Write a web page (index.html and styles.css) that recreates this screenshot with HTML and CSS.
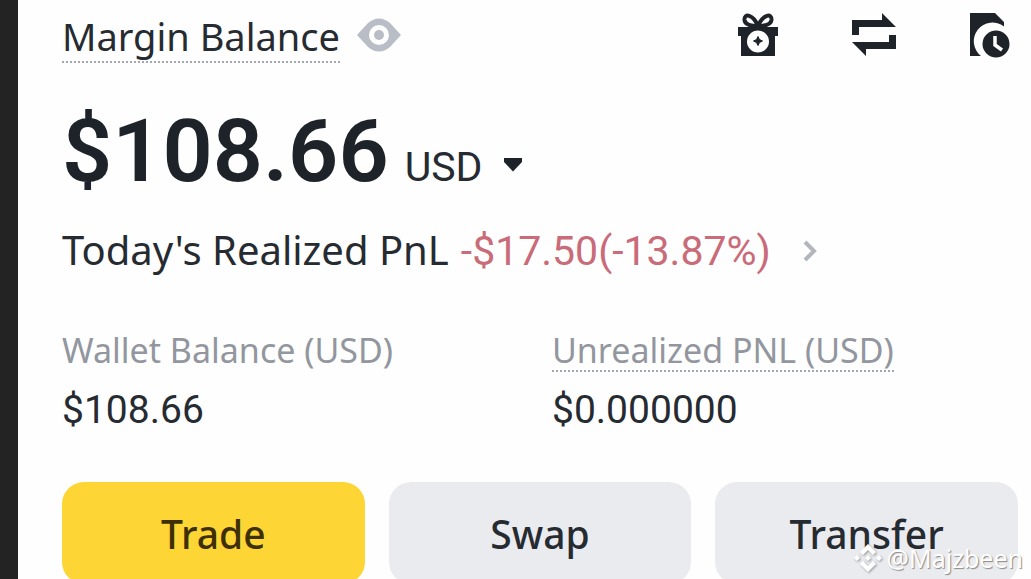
FILE: index.html
```html
<!DOCTYPE html>
<html lang="en">
<head>
<meta charset="utf-8">
<meta name="viewport" content="width=device-width, initial-scale=1">
<title>Margin Balance</title>
<link rel="stylesheet" href="styles.css">
</head>
<body>
<main class="wallet">
  <header class="topbar">
    <h1 class="title">Margin Balance</h1>
    <button class="icon-button eye" type="button" aria-label="Hide balance">
      <svg width="44" height="34" viewBox="0 0 44 34"><path fill="#b9bdc5" fill-rule="evenodd" d="M0 17 11 5Q22-4 33 5L44 17 33 29Q22 38 11 29ZM22 7a10 10 0 1 0 0 20 10 10 0 0 0 0-20Z"/><circle cx="22" cy="17" r="5" fill="#b9bdc5"/></svg>
    </button>
    <nav class="actions">
      <button class="icon-button" type="button" aria-label="Rewards">
        <svg width="40" height="44" viewBox="0 0 40 44"><g fill="none" stroke="#1e2329" stroke-width="4"><path d="M20 13C15 1 6 0 6.500 7c.5 5 7 6 13.500 6Z"/><path d="M20 13C25 1 34 0 33.500 7c-.5 5-7 6-13.500 6Z"/></g><path fill="#1e2329" fill-rule="evenodd" d="M0 14h40v9h-3v20H3V23H0ZM20 17.500a11 11 0 1 0 0 22 11 11 0 0 0 0-22Z"/><path fill="#1e2329" d="m20 23.500 1.500 3 3 1.500-3 1.500-1.500 3-1.500-3-3-1.500 3-1.500Z" stroke="#1e2329"/></svg>
      </button>
      <button class="icon-button" type="button" aria-label="Convert">
        <svg width="44" height="44" viewBox="0 0 44 44"><path fill="#1e2329" d="M0 7h30V0l14 14H7v8H0ZM44 36H14v7L0 29h37v-7h7Z"/></svg>
      </button>
      <button class="icon-button" type="button" aria-label="History">
        <svg width="40" height="46" viewBox="0 0 40 46"><path fill="#1e2329" d="M0 1h25l9 9v4.500A18 18 0 0 0 11 44H0Z"/><circle cx="26" cy="32" r="13.500" fill="#1e2329"/><path fill="none" stroke="#fff" stroke-width="3.500" d="M25 24v9l7 5"/></svg>
      </button>
    </nav>
  </header>

  <div class="balance">
    <span class="amount">$108.66</span>
    <button class="currency" type="button">USD
      <svg width="20" height="14" viewBox="0 0 20 14" aria-hidden="true"><path fill="#1e2329" d="M1 0h18v4l-9 9.500L1 4Z"/></svg>
    </button>
  </div>

  <a class="pnl" href="#pnl">
    <span>Today's Realized PnL</span>
    <span class="loss">-$17.50(-13.87%)</span>
    <svg class="chevron" width="14" height="22" viewBox="0 0 14 22" aria-hidden="true"><path fill="none" stroke="#b3b7bd" stroke-width="4" d="m2 2 9 9-9 9"/></svg>
  </a>

  <dl class="stats">
    <div class="stat"><dt><span>Wallet Balance (USD)</span></dt><dd>$108.66</dd></div>
    <div class="stat"><dt><span class="hint">Unrealized PNL (USD)</span></dt><dd>$0.000000</dd></div>
  </dl>

  <div class="buttons">
    <button class="button primary" type="button">Trade</button>
    <button class="button" type="button">Swap</button>
    <button class="button" type="button">Transfer</button>
  </div>
</main>
<div class="watermark">
  <svg width="28" height="28" viewBox="0 0 28 28" aria-hidden="true"><path fill="#fff" d="m14 0 8 8-3 3-5-5-5 5-3-3ZM3 11l3 3-3 3-3-3ZM25 11l3 3-3 3-3-3ZM14 11l3 3-3 3-3-3ZM6 20l3-3 5 5 5-5 3 3-8 8Z"/></svg>
  <span>@Majzbeen</span>
</div>
</body>
</html>
```
FILE: styles.css
```css
* {
  box-sizing: border-box;
}

body {
  margin: 0;
  min-height: 100vh;
  overflow: hidden;
  position: relative;
  border-left: 18px solid #232323;
  background: #fefefe;
  color: #262b32;
  font-family: "Noto Sans", sans-serif;
}

button {
  padding: 0;
  border: 0;
  background: none;
  color: inherit;
  font: inherit;
}

svg {
  display: block;
}

.wallet {
  padding: 12px 13px 0 44px;
}

.topbar {
  display: flex;
  align-items: flex-start;
}

.title {
  margin: 0;
  padding-bottom: 1px;
  border-bottom: 2px dotted #a3a7af;
  font-size: 38px;
  font-weight: 400;
  line-height: 48px;
}

.eye {
  margin: 6px 0 0 17px;
}

.actions {
  display: flex;
  gap: 74px;
  margin-left: auto;
  padding-right: 8px;
}

.balance {
  display: flex;
  align-items: baseline;
  gap: 16px;
  margin-top: 38px;
  line-height: 100px;
}

.amount {
  color: #1e2329;
  font-family: Roboto, sans-serif;
  font-size: 88px;
  font-weight: 600;
}

.currency {
  display: flex;
  align-items: center;
  gap: 20px;
  font-family: Roboto, sans-serif;
  font-size: 41px;
  line-height: 48px;
}

.currency svg {
  margin-bottom: 4px;
}

.pnl {
  display: flex;
  align-items: baseline;
  gap: 12px;
  margin-top: 25px;
  color: inherit;
  font-size: 40px;
  line-height: 48px;
  text-decoration: none;
}

.loss {
  color: #c96b78;
  font-family: Roboto, sans-serif;
  font-size: 41px;
}

.chevron {
  align-self: center;
  margin-left: 20px;
}

.stats {
  display: grid;
  grid-template-columns: 1fr 1fr;
  gap: 24px;
  margin: 53px 0 0;
}

.stat dt {
  color: #92969e;
  font-size: 34px;
  line-height: 44px;
}

.hint {
  display: block;
  width: fit-content;
  height: 44px;
  border-bottom: 2px dotted #a3a7af;
}

.stat dd {
  margin: 14px 0 0;
  font-family: Roboto, sans-serif;
  font-size: 39px;
  line-height: 48px;
}

.buttons {
  display: grid;
  grid-template-columns: repeat(3, 1fr);
  gap: 24px;
  margin-top: 48px;
}

.button {
  height: 102px;
  border-radius: 22px;
  background: #eaebef;
  font-size: 39px;
  font-weight: 500;
}

.primary {
  background: #fdd535;
  color: #3d3005;
}

.watermark {
  position: absolute;
  right: 8px;
  bottom: 10px;
  display: flex;
  align-items: center;
  gap: 5px;
  color: #fff;
  font-size: 25px;
  line-height: 32px;
  text-shadow: 1px 1px 1px #888;
}

.watermark svg {
  filter: drop-shadow(1px 1px 1px #999);
}
```
